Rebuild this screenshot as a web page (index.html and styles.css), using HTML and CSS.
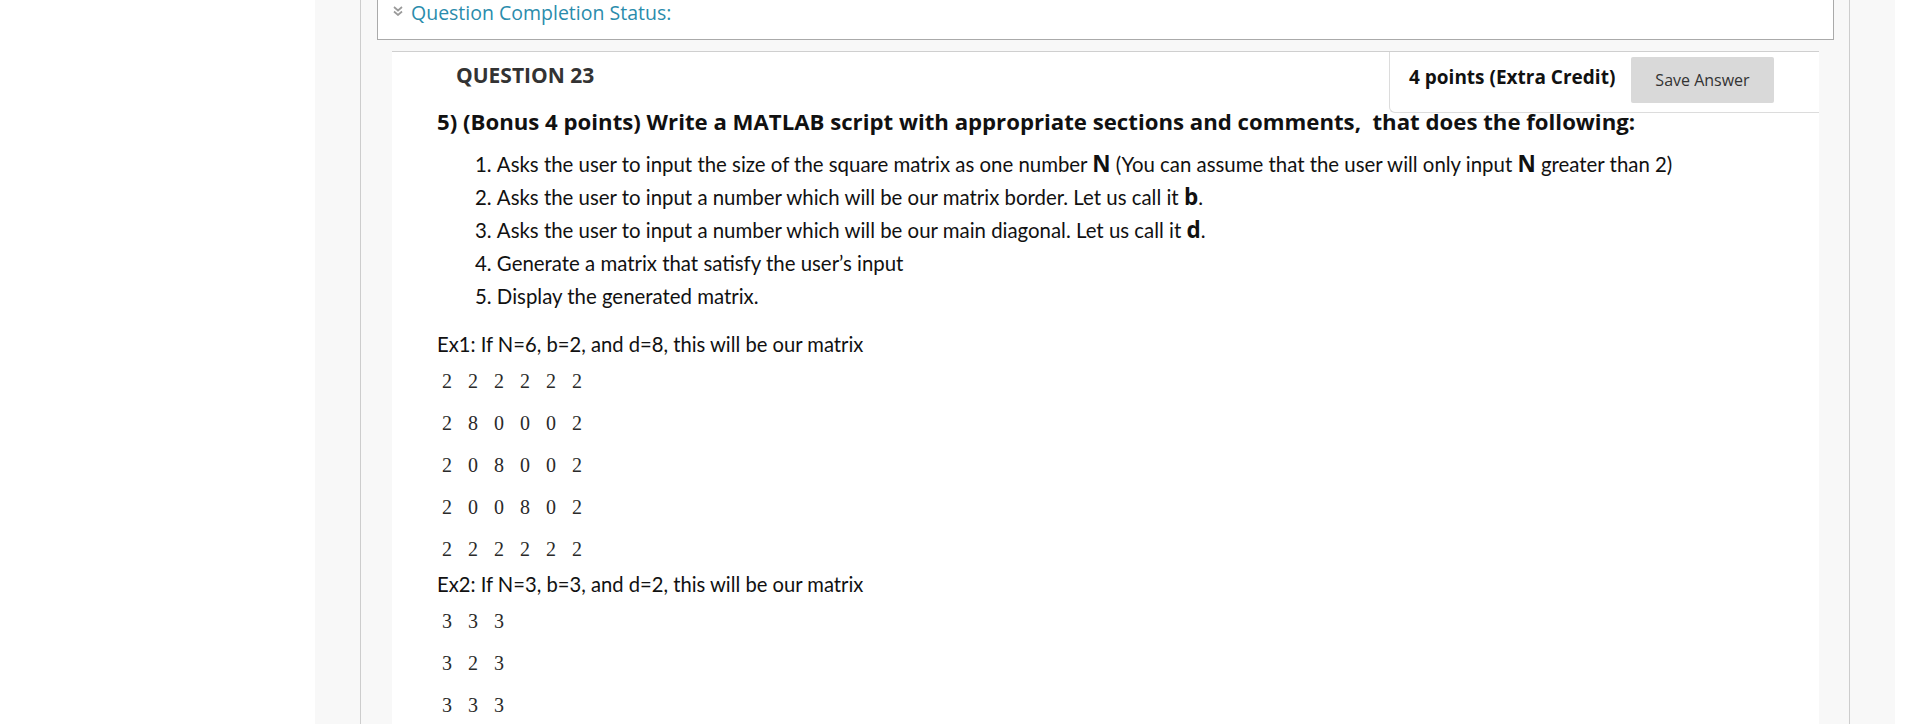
FILE: index.html
```html
<!DOCTYPE html>
<html lang="en">
<head>
    <meta charset="UTF-8">
    <title>Take Test: Question 23</title>
    <link rel="stylesheet" href="styles.css">
</head>
<body>
    <div class="page">
        <div class="panel">
            <div class="status-box">
                <svg class="chevron" width="10" height="10" viewBox="0 0 10 10">
                    <polyline points="1,1 5,4.5 9,1" fill="none" stroke="#9a9a9a" stroke-width="1.7"/>
                    <polyline points="1,5.5 5,9 9,5.5" fill="none" stroke="#9a9a9a" stroke-width="1.7"/>
                </svg><a href="#" class="status-link">Question Completion Status:</a>
            </div>

            <div class="question">
                <div class="question-header">
                    <h3 class="question-title">QUESTION 23</h3>
                    <div class="points-box">
                        <span class="points">4 points (Extra Credit)</span>
                        <button class="save-btn">Save Answer</button>
                    </div>
                </div>

                <div class="question-body">
                    <h4 class="prompt">5) (Bonus 4 points) Write a MATLAB script with appropriate sections and comments,&nbsp; that does the following:</h4>
                    <ol class="steps">
                        <li>Asks the user to input the size of the square matrix as one number <b class="var">N</b> (You can assume that the user will only input <b class="var">N</b> greater than 2)</li>
                        <li>Asks the user to input a number which will be our matrix border. Let us call it <b class="var">b</b>.</li>
                        <li>Asks the user to input a number which will be our main diagonal. Let us call it <b class="var">d</b>.</li>
                        <li>Generate a matrix that satisfy the user’s input</li>
                        <li>Display the generated matrix.</li>
                    </ol>

                    <p class="example first">Ex1: If N=6, b=2, and d=8, this will be our matrix</p>
                    <div class="matrix">
                        <div>2 2 2 2 2 2</div>
                        <div>2 8 0 0 0 2</div>
                        <div>2 0 8 0 0 2</div>
                        <div>2 0 0 8 0 2</div>
                        <div>2 2 2 2 2 2</div>
                    </div>

                    <p class="example">Ex2: If N=3, b=3, and d=2, this will be our matrix</p>
                    <div class="matrix">
                        <div>3 3 3</div>
                        <div>3 2 3</div>
                        <div>3 3 3</div>
                    </div>
                </div>
            </div>
        </div>
    </div>
</body>
</html>
```

FILE: styles.css
```css
html, body {
    margin: 0;
    padding: 0;
    background-color: #fff;
    overflow: hidden;
}
body {
    font-family: 'Open Sans', sans-serif;
    color: #111;
}
.page {
    margin-left: 315px;
    width: 1580px;
    height: 724px;
    background-color: #f8f8f8;
    overflow: hidden;
}
.panel {
    margin-left: 45px;
    width: 1490px;
    height: 100%;
    box-sizing: border-box;
    border-left: 1px solid #cdcdcd;
    border-right: 1px solid #cdcdcd;
}

/* barra de status (rolada para cima) */
.status-box {
    margin-left: 16px;
    width: 1457px;
    box-sizing: border-box;
    background-color: #fff;
    border: 1px solid #aaa;
    border-top: none;
    padding: 0 0 13px 15px;
    font-size: 19.5px;
    line-height: 26px;
}
.chevron {
    display: inline-block;
    vertical-align: 4px;
    margin-right: 8px;
}
.status-link {
    color: #2a8cac;
    text-decoration: none;
}

/* questão */
.question {
    margin-top: 11px;
    margin-left: 31px;
    width: 1427px;
    height: 700px;
    background-color: #fff;
    border-top: 1px solid #cfcfcf;
}
.question-header {
    display: flex;
    justify-content: space-between;
    align-items: flex-start;
}
.question-title {
    margin: 8px 0 0 0;
    padding-left: 64px;
    font-size: 21px;
    line-height: 30px;
    font-weight: 700;
    color: #333;
}
.points-box {
    width: 430px;
    height: 61px;
    box-sizing: border-box;
    display: flex;
    justify-content: space-between;
    align-items: flex-start;
    padding: 5px 45px 0 19px;
    border-left: 1px solid #dcdcdc;
    border-bottom: 1px solid #dcdcdc;
    border-bottom-left-radius: 6px;
}
.points {
    margin-top: 7px;
    font-size: 19px;
    line-height: 26px;
    font-weight: 700;
    color: #111;
}
.save-btn {
    width: 143px;
    height: 46px;
    border: none;
    border-radius: 2px;
    background-color: #d9d9d9;
    color: #333;
    font-family: 'Open Sans', sans-serif;
    font-size: 16px;
    padding: 0;
    cursor: pointer;
}

.question-body {
    padding-left: 45px;
}
.prompt {
    margin: 0;
    font-size: 22.2px;
    line-height: 18px;
    font-weight: 700;
    color: #111;
}
.steps {
    margin: 17px 0 0 0;
    padding-left: 38px;
    list-style-position: inside;
    font-family: 'Lato', sans-serif;
    font-size: 20.4px;
    line-height: 33px;
    color: #111;
}
.var {
    font-family: 'Open Sans', sans-serif;
    font-size: 22.5px;
    line-height: 10px;
}
.example {
    margin: 0;
    font-family: 'Lato', sans-serif;
    font-size: 20.2px;
    line-height: 29px;
    color: #111;
}
.example.first {
    margin-top: 17px;
}
.matrix {
    margin-top: 1px;
    padding-left: 5px;
    font-family: 'Liberation Serif', serif;
    font-size: 20px;
    line-height: 42px;
    word-spacing: 11px;
    color: #2a2a2a;
}
```
